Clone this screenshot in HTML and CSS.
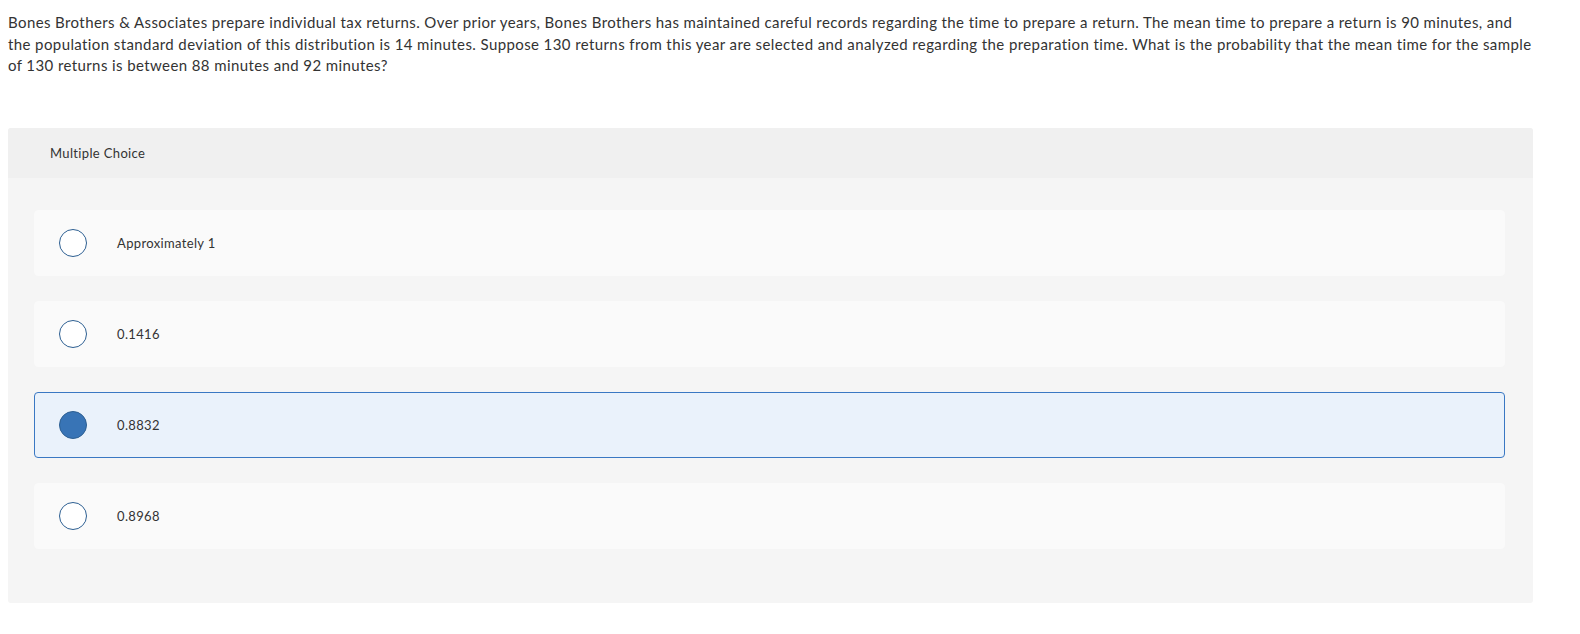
FILE: index.html
```html
<!DOCTYPE html>
<html>
<head>
<meta charset="utf-8">
<link rel="stylesheet" href="styles.css">
</head>
<body>
<div class="wrap">
  <p class="question">Bones Brothers &amp; Associates prepare individual tax returns. Over prior years, Bones Brothers has maintained careful records regarding the time to prepare a return. The mean time to prepare a return is 90 minutes, and the population standard deviation of this distribution is 14 minutes. Suppose 130 returns from this year are selected and analyzed regarding the preparation time. What is the probability that the mean time for the sample of 130 returns is between 88 minutes and 92 minutes?</p>
  <div class="panel">
    <div class="panel-head">Multiple Choice</div>
    <div class="options">
      <div class="option"><span class="radio"></span><span class="label">Approximately 1</span></div>
      <div class="option"><span class="radio"></span><span class="label">0.1416</span></div>
      <div class="option selected"><span class="radio"></span><span class="label">0.8832</span></div>
      <div class="option"><span class="radio"></span><span class="label">0.8968</span></div>
    </div>
  </div>
</div>
</body>
</html>
```
FILE: styles.css
```css
html, body {
  margin: 0;
  padding: 0;
  background: #ffffff;
}
body {
  padding: 8px;
  font-family: "Lato", "Open Sans", sans-serif;
  color: #333333;
}
.wrap {
  width: 1525px;
}
.question {
  margin: 4px 0 0 0;
  font-size: 15px;
  line-height: 21.5px;
  letter-spacing: 0.4px;
  color: #333333;
}
.panel {
  margin-top: 51px;
  background: #f5f5f5;
  border-radius: 3px;
}
.panel-head {
  height: 50px;
  background: #f0f0f0;
  border-radius: 3px 3px 0 0;
  display: flex;
  align-items: center;
  padding-left: 42px;
  font-size: 13px;
  letter-spacing: 0.35px;
  color: #333333;
}
.options {
  display: flex;
  flex-direction: column;
  gap: 25px;
  padding: 32px 28px 54px 26px;
}
.option {
  height: 66px;
  box-sizing: border-box;
  background: #fafafa;
  border: 1px solid #fafafa;
  border-radius: 4px;
  display: flex;
  align-items: center;
  padding-left: 24px;
}
.option.selected {
  background: #eaf2fb;
  border-color: #3a78c3;
}
.radio {
  width: 28px;
  height: 28px;
  box-sizing: border-box;
  border: 1.5px solid #2d5f92;
  border-radius: 50%;
  background: #ffffff;
  flex: none;
}
.option.selected .radio {
  background: #3874b6;
  border-color: #2d5f92;
}
.label {
  margin-left: 30px;
  font-size: 13px;
  letter-spacing: 0.35px;
  color: #333333;
}
```
